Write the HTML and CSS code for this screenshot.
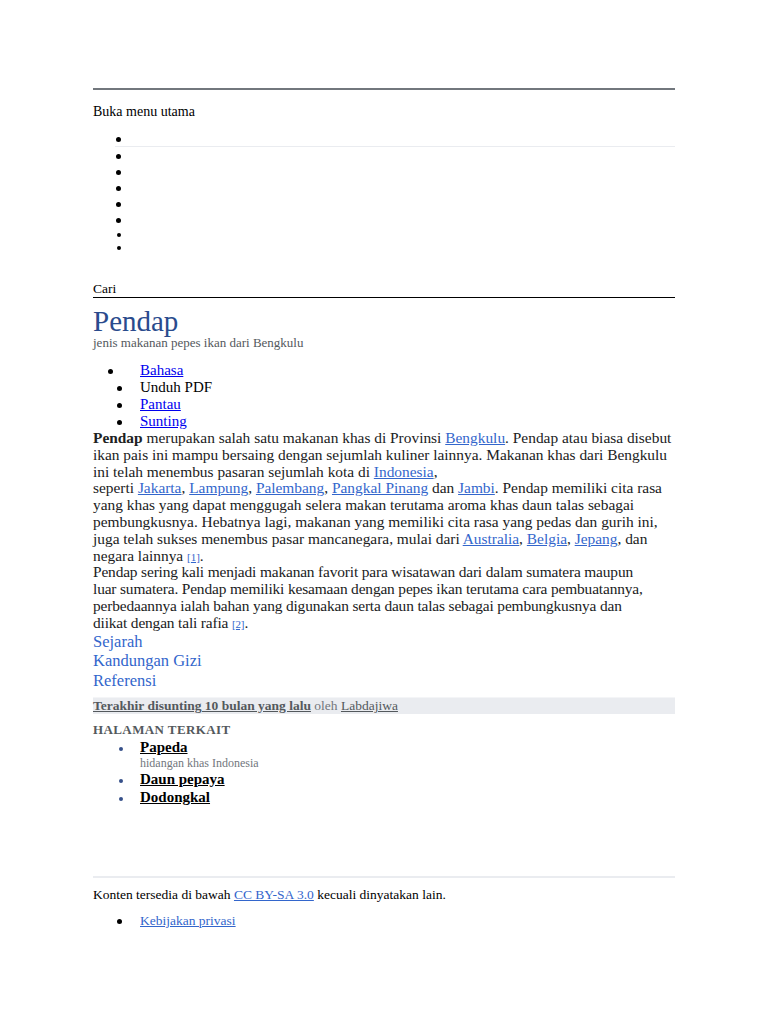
FILE: index.html
```html
<!DOCTYPE html>
<html lang="id">
<head>
<meta charset="utf-8">
<title>Pendap</title>
<link rel="stylesheet" href="styles.css">
</head>
<body>
<div class="page">
  <div class="topline"></div>
  <div class="menu-label">Buka menu utama</div>
  <ul class="main-menu">
    <li class="first"></li>
    <li></li>
    <li></li>
    <li></li>
    <li></li>
    <li></li>
    <li class="small"></li>
    <li class="small"></li>
  </ul>
  <div class="search">Cari</div>
  <h1 class="title">Pendap</h1>
  <div class="subtitle">jenis makanan pepes ikan dari Bengkulu</div>
  <ul class="actions">
    <li class="wide"><a href="#">Bahasa</a></li>
    <li>Unduh PDF</li>
    <li><a href="#">Pantau</a></li>
    <li><a href="#">Sunting</a></li>
  </ul>
  <div class="content">
    <p><b>Pendap</b> merupakan salah satu makanan khas di Provinsi <a href="#">Bengkulu</a>. Pendap atau biasa disebut ikan pais ini mampu bersaing dengan sejumlah kuliner lainnya. Makanan khas dari Bengkulu ini telah menembus pasaran sejumlah kota di <a href="#">Indonesia</a>,<br>seperti <a href="#">Jakarta</a>, <a href="#">Lampung</a>, <a href="#">Palembang</a>, <a href="#">Pangkal Pinang</a> dan <a href="#">Jambi</a>. Pendap memiliki cita rasa yang khas yang dapat menggugah selera makan terutama aroma khas daun talas sebagai pembungkusnya. Hebatnya lagi, makanan yang memiliki cita rasa yang pedas dan gurih ini, juga telah sukses menembus pasar mancanegara, mulai dari <a href="#">Australia</a>, <a href="#">Belgia</a>, <a href="#">Jepang</a>, dan negara lainnya <sup class="ref"><a href="#">[1]</a></sup>.</p>
    <p class="tight">Pendap sering kali menjadi makanan favorit para wisatawan dari dalam sumatera maupun<br>luar sumatera. Pendap memiliki kesamaan dengan pepes ikan terutama cara pembuatannya, perbedaannya ialah bahan yang digunakan serta daun talas sebagai pembungkusnya dan<br>diikat dengan tali rafia <sup class="ref"><a href="#">[2]</a></sup>.</p>
    <div class="section">Sejarah</div>
    <div class="section">Kandungan Gizi</div>
    <div class="section">Referensi</div>
  </div>
  <div class="last-edited"><a class="edited" href="#">Terakhir disunting 10 bulan yang lalu</a> oleh <a class="user" href="#">Labdajiwa</a></div>
  <div class="related">
    <h2 class="related-title">Halaman terkait</h2>
    <ul class="related-list">
      <li><a href="#">Papeda</a><div class="desc">hidangan khas Indonesia</div></li>
      <li><a href="#">Daun pepaya</a></li>
      <li><a href="#">Dodongkal</a></li>
    </ul>
  </div>
  <footer class="footer">
    <div class="license">Konten tersedia di bawah <a href="#">CC BY-SA 3.0</a> kecuali dinyatakan lain.</div>
    <ul class="footer-links">
      <li><a href="#">Kebijakan privasi</a></li>
    </ul>
  </footer>
</div>
</body>
</html>
```

FILE: styles.css
```css
html, body {
  margin: 0;
  padding: 0;
  background: #fff;
}
body {
  font-family: "Liberation Serif", "Times New Roman", serif;
  color: #202122;
}
ul {
  list-style: none;
}
.page {
  width: 582px;
  margin: 0 auto;
  padding-top: 88px;
}
.topline {
  height: 2px;
  background: #72777d;
}
.menu-label {
  font-size: 14px;
  color: #000;
  margin-top: 14px;
  line-height: 16px;
}
.main-menu {
  margin: 10px 0 0 0;
  padding: 0 0 0 22px;
}
.main-menu li {
  height: 16px;
  line-height: 16px;
}
.main-menu li::before {
  content: "";
  display: inline-block;
  width: 5px;
  height: 5px;
  border-radius: 50%;
  background: #000;
  margin-left: 1px;
  vertical-align: middle;
}
.main-menu li.first {
  border-bottom: 1px solid #eaecf0;
}
.main-menu li.small {
  height: 13px;
  line-height: 13px;
}
.main-menu li.small::before {
  width: 4px;
  height: 4px;
  margin-left: 2px;
}
.search {
  margin-top: 28px;
  font-size: 13.5px;
  line-height: 15px;
  color: #000;
  border-bottom: 1px solid #000;
  padding-bottom: 1px;
}
.title {
  font-family: "Liberation Serif", serif;
  font-weight: normal;
  font-size: 29px;
  line-height: 34px;
  color: #2a4b8d;
  margin: 6px 0 0 0;
}
.subtitle {
  font-size: 13px;
  color: #54595d;
  line-height: 14px;
  margin-top: -2px;
}
.actions {
  margin: 12px 0 0 0;
  padding: 0;
  font-size: 15px;
  line-height: 17px;
  color: #000;
}
.actions li {
  padding-left: 47px;
}
.actions li::before,
.footer-links li::before,
.related-list li::before {
  content: "";
  display: inline-block;
  width: 5px;
  height: 5px;
  border-radius: 50%;
  background: #000;
  vertical-align: middle;
  margin-left: -23px;
  margin-right: 18px;
}
.actions li.wide::before {
  margin-left: -32px;
  margin-right: 27px;
}
.actions a {
  color: #0000ee;
}
.content {
  font-size: 15.4px;
  line-height: 16.8px;
  color: #202122;
}
.content p {
  margin: 0;
}
.content p.tight {
  letter-spacing: -0.15px;
}
.content a {
  color: #3366cc;
}
.ref {
  font-size: 11px;
  line-height: 0;
  vertical-align: baseline;
}
.section {
  font-size: 16.5px;
  line-height: 19.5px;
  color: #3366cc;
}
.last-edited {
  margin-top: 7px;
  border-top: 1px solid #f4f5f7;
  background: #eaecf0;
  font-size: 13.5px;
  line-height: 16px;
  color: #72777d;
}
.last-edited a {
  color: #54595d;
}
.last-edited .edited {
  font-weight: bold;
}
.related {
  margin-top: 8px;
}
.related-title {
  margin: 0;
  font-size: 13px;
  font-weight: bold;
  text-transform: uppercase;
  letter-spacing: 0.4px;
  color: #54595d;
  line-height: 16px;
}
.related-list {
  margin: 0;
  padding: 0;
  font-size: 15px;
}
.related-list li {
  line-height: 18px;
  padding-left: 47px;
}
.related-list li::before {
  width: 4px;
  height: 4px;
  background: #36508a;
  margin-left: -21px;
  margin-right: 17px;
}
.related-list a {
  color: #000;
  font-weight: bold;
}
.related-list .desc {
  font-size: 12px;
  color: #72777d;
  line-height: 14px;
}
.footer {
  margin-top: 70px;
  border-top: 2px solid #eaecf0;
}
.license {
  font-size: 13.5px;
  line-height: 16px;
  margin-top: 9px;
  color: #000;
}
.license a {
  color: #3366cc;
}
.footer-links {
  margin: 10px 0 0 0;
  padding: 0;
  font-size: 13.5px;
  line-height: 16px;
}
.footer-links li {
  padding-left: 47px;
}
.footer-links a {
  color: #3366cc;
}
```
